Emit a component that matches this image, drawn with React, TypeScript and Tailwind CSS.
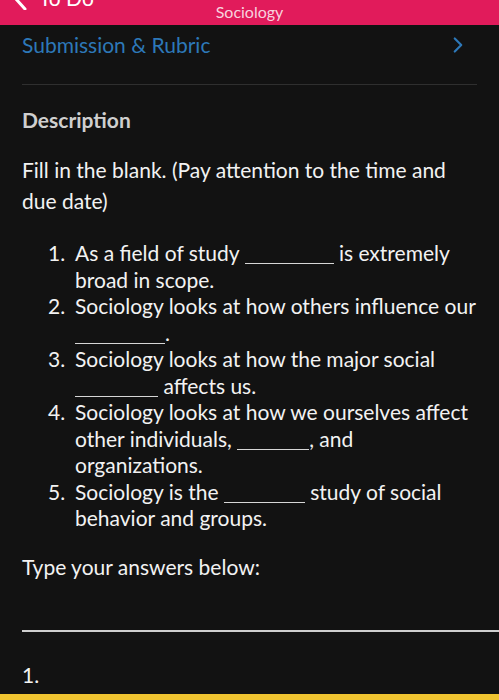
import { ChevronRight } from "lucide-react";

function Blank({ w }: { w: string }) {
  return <span className={`-mb-[3px] inline-block border-b-[1.5px] border-[#d6d6d6] ${w}`} />;
}

const items: React.ReactNode[][] = [
  [<>As a field of study <Blank w="w-[89px]" /> is extremely</>, "broad in scope."],
  ["Sociology looks at how others influence our", <><Blank w="w-[90px]" />.</>],
  ["Sociology looks at how the major social", <><Blank w="w-[83px]" /> affects us.</>],
  [
    "Sociology looks at how we ourselves affect",
    <>other individuals, <Blank w="w-[72px]" />, and</>,
    "organizations.",
  ],
  [<>Sociology is the <Blank w="w-[81px]" /> study of social</>, "behavior and groups."],
];

export default function App() {
  return (
    <div className="h-[700px] w-[499px] overflow-hidden bg-[#121212] font-['Lato',sans-serif] text-[#f2f2f2]">
      <header className="flex h-[25px] flex-col overflow-hidden bg-[#e11b5b]">
        <div className="-mt-[12px] flex h-[20px] items-end gap-[12px] pl-[13px]">
          <svg width="14" height="22" viewBox="0 0 14 22" className="-mb-[2px]">
            <path d="M12 1 L3 11 L12 21" fill="none" stroke="#fff" strokeWidth="3" strokeLinecap="round" strokeLinejoin="round" />
          </svg>
          <span className="text-[21px] leading-[21px] text-white">To Do</span>
        </div>
        <div className="-mt-[6px] text-center text-[16px] leading-[19px] text-[#f8d2de]">Sociology</div>
      </header>

      <div className="flex h-[39px] items-center justify-between pl-[22px] pr-[28px]">
        <span className="text-[21px] text-[#2d78b8]">Submission &amp; Rubric</span>
        <ChevronRight size={26} strokeWidth={2} className="text-[#2d78b8]" aria-hidden="true" />
      </div>

      <div className="mx-[22px] mt-[20px] h-px bg-[#2f2f2f]" />

      <div className="px-[22px] text-[21px]">
        <h2 className="mt-[21px] font-bold leading-[28px] text-[#cfcfcf]">Description</h2>
        <p className="mt-[20px] leading-[31px]">
          Fill in the blank. (Pay attention to the time and due date)
        </p>

        <div className="mt-[24px] leading-[26.5px]">
          {items.map((lines, i) => (
            <div key={i} className="flex">
              <span className="ml-[26px] w-[27px] shrink-0">{i + 1}.</span>
              <div className="flex flex-col">
                {lines.map((l, j) => (
                  <span key={j} className="whitespace-nowrap">
                    {l}
                  </span>
                ))}
              </div>
            </div>
          ))}
        </div>

        <p className="mt-[21px] leading-[28px]">Type your answers below:</p>
      </div>

      <div className="ml-[22px] mt-[49px] h-[2px] bg-[#cfcfcf]" />

      <p className="ml-[22px] mt-[29px] text-[21px] leading-[28px]">1.</p>

      <div className="mt-[5px] h-[8px] bg-[#f0c431]" />
    </div>
  );
}
